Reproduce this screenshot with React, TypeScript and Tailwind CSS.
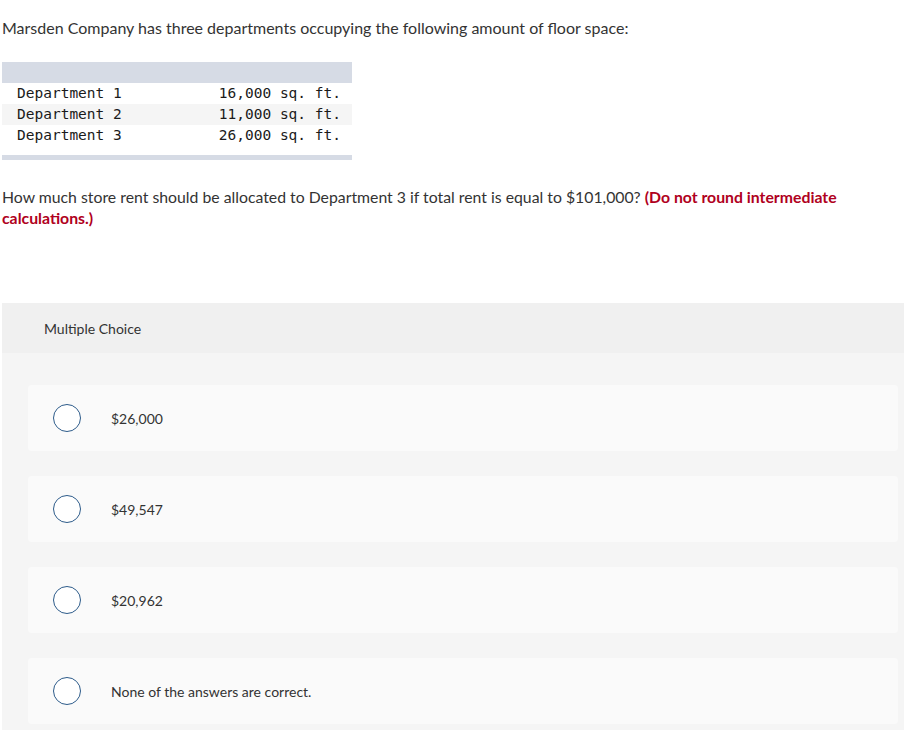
const departments = [
  { name: 'Department 1', area: '16,000 sq. ft.' },
  { name: 'Department 2', area: '11,000 sq. ft.' },
  { name: 'Department 3', area: '26,000 sq. ft.' },
];

const choices = ['$26,000', '$49,547', '$20,962', 'None of the answers are correct.'];

export default function App() {
  return (
    <div className="min-h-[730px] bg-white text-[#333] font-['Lato',sans-serif]">
      <p className="pl-[2px] pt-[17px] text-[16px] leading-[21px]">
        Marsden Company has three departments occupying the following amount of floor space:
      </p>

      {/* floor space table */}
      <div className="ml-[2px] mt-[24px] w-[350px] font-['DejaVu_Sans_Mono',monospace] text-[14.5px] text-[#1a1a1a]">
        <div className="h-[21px] bg-[#d6dbe5]" />
        {departments.map((d, i) => (
          <div
            key={d.name}
            className={`flex h-[21px] items-center justify-between pl-[15px] pr-[11px] pt-[1px] ${i === 1 ? 'bg-[#f5f5f5]' : ''}`}
          >
            <span>{d.name}</span>
            <span>{d.area}</span>
          </div>
        ))}
        <div className="mt-[9px] h-[5px] bg-[#d6dbe5]" />
      </div>

      <p className="pl-[2px] pt-[26px] pr-[40px] text-[15.8px] leading-[21px]">
        How much store rent should be allocated to Department 3 if total rent is equal to $101,000?{' '}
        <strong className="font-bold text-[#b00020]">(Do not round intermediate calculations.)</strong>
      </p>

      {/* multiple choice */}
      <div className="ml-[2px] mt-[75px] bg-[#f5f5f5] pb-[6px]">
        <div className="flex h-[50px] items-center bg-[#f0f0f0] pl-[42px] text-[14px]">Multiple Choice</div>
        <div className="flex flex-col gap-[25px] pl-[26px] pr-[6px] pt-[32px]">
          {choices.map((c) => (
            <label key={c} className="flex h-[66px] items-center rounded-[4px] bg-[#fafafa]">
              <span className="ml-[25px] h-[28px] w-[28px] rounded-full border-[1.5px] border-[#2d5b8a] bg-white" />
              <span className="ml-[30px] text-[14px]">{c}</span>
            </label>
          ))}
        </div>
      </div>
    </div>
  );
}
